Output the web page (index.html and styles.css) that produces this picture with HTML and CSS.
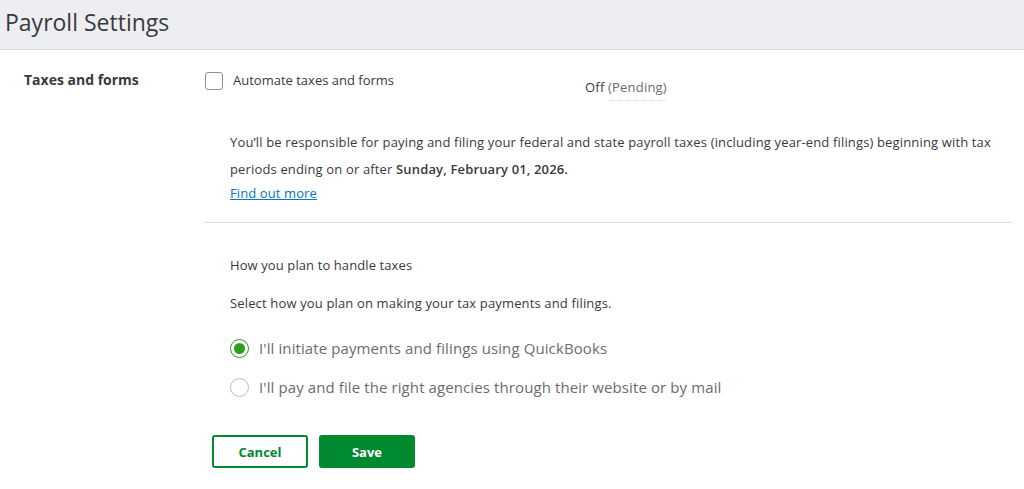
FILE: index.html
```html
<!DOCTYPE html>
<html>
<head>
  <title>Payroll Settings</title>
  <link rel="stylesheet" href="styles.css">
</head>
<body>
  <div class="page">
    <div class="header">
      <h1>Payroll Settings</h1>
    </div>

    <div class="section">
      <div class="section-title">Taxes and forms</div>
      <div class="section-body">
        <div class="top-row">
          <label class="check">
            <span class="checkbox"></span>
            <span class="check-label">Automate taxes and forms</span>
          </label>
          <div class="status">
            Off <span class="pending">(Pending)</span>
          </div>
        </div>

        <div class="notice">
          <p class="notice-text">
            You’ll be responsible for paying and filing your federal and state payroll taxes (including year-end filings) beginning with tax periods ending on or after <strong>Sunday, February 01, 2026.</strong>
          </p>
          <a href="#" class="link">Find out more</a>
        </div>

        <div class="divider"></div>

        <div class="plan">
          <div class="plan-title">How you plan to handle taxes</div>
          <div class="plan-desc">Select how you plan on making your tax payments and filings.</div>
          <div class="radio-list">
            <label class="radio-row">
              <span class="radio checked"></span>
              <span class="radio-label">I'll initiate payments and filings using QuickBooks</span>
            </label>
            <label class="radio-row">
              <span class="radio"></span>
              <span class="radio-label">I'll pay and file the right agencies through their website or by mail</span>
            </label>
          </div>
        </div>

        <div class="actions">
          <button class="btn btn-secondary">Cancel</button>
          <button class="btn btn-primary">Save</button>
        </div>
      </div>
    </div>
  </div>
</body>
</html>
```

FILE: styles.css
```css
body {
  margin: 0;
  font-family: "Open Sans", "Noto Sans", sans-serif;
  color: #393a3d;
  background: #ffffff;
}

.page {
  width: 1024px;
}

.header {
  height: 50px;
  box-sizing: border-box;
  background: #eceef1;
  border-bottom: 1px solid #d9dce0;
  padding: 6px 0 0 5px;
}

h1 {
  margin: 0;
  font-size: 23px;
  font-weight: 400;
  line-height: 32px;
  color: #393a3d;
}

.section {
  display: flex;
  padding-top: 20px;
}

.section-title {
  width: 179px;
  padding-left: 24px;
  font-size: 14px;
  font-weight: 700;
  line-height: 20px;
}

.section-body {
  width: 810px;
}

.top-row {
  display: flex;
  align-items: flex-start;
}

.check {
  display: flex;
  align-items: center;
  gap: 10px;
  width: 382px;
  cursor: pointer;
}

.checkbox {
  width: 16px;
  height: 16px;
  border: 1px solid #8d9096;
  border-radius: 3px;
  margin-left: 2px;
  margin-top: 2px;
}

.check-label {
  font-size: 13px;
}

.status {
  font-size: 13px;
  letter-spacing: 0.2px;
  padding-top: 8px;
}

.pending {
  color: #6b6c72;
  border-bottom: 1px dotted #d4d7dc;
  padding-bottom: 4px;
}

.notice {
  padding-left: 27px;
  padding-top: 33px;
}

.notice-text {
  margin: 0;
  font-size: 13px;
  letter-spacing: 0.15px;
  line-height: 27px;
}

.notice-text strong {
  font-weight: 600;
}

.link {
  display: block;
  width: max-content;
  margin-top: 1px;
  font-size: 13px;
  letter-spacing: 0.1px;
  color: #0077c5;
  line-height: 18px;
}

.divider {
  height: 1px;
  background: #dcdcdc;
  margin-top: 20px;
}

.plan {
  padding-left: 27px;
  padding-top: 33px;
}

.plan-title {
  font-size: 13px;
  font-weight: 500;
  letter-spacing: 0.1px;
}

.plan-desc {
  font-size: 13px;
  letter-spacing: 0.15px;
  margin-top: 20px;
}

.radio-list {
  display: grid;
  gap: 19px;
  margin-top: 26px;
}

.radio-row {
  display: flex;
  align-items: center;
  gap: 10px;
}

.radio {
  width: 17px;
  height: 17px;
  border: 1px solid #babec5;
  border-radius: 50%;
  position: relative;
  flex-shrink: 0;
}

.radio.checked {
  border-color: #2ca01c;
}

.radio.checked:before {
  content: "";
  position: absolute;
  top: 3px;
  left: 3px;
  width: 11px;
  height: 11px;
  border-radius: 50%;
  background: #2ca01c;
}

.radio-label {
  font-size: 15px;
  letter-spacing: 0.1px;
  line-height: 20px;
  color: #6b6c72;
}

.actions {
  display: flex;
  gap: 11px;
  padding-left: 9px;
  margin-top: 38px;
}

.btn {
  width: 96px;
  height: 33px;
  border-radius: 3px;
  font-family: "Open Sans", sans-serif;
  font-size: 13px;
  font-weight: 700;
  cursor: pointer;
}

.btn-secondary {
  background: #ffffff;
  border: 2px solid #00892e;
  color: #00892e;
}

.btn-primary {
  background: #00892e;
  border: 2px solid #00892e;
  color: #ffffff;
}
```
